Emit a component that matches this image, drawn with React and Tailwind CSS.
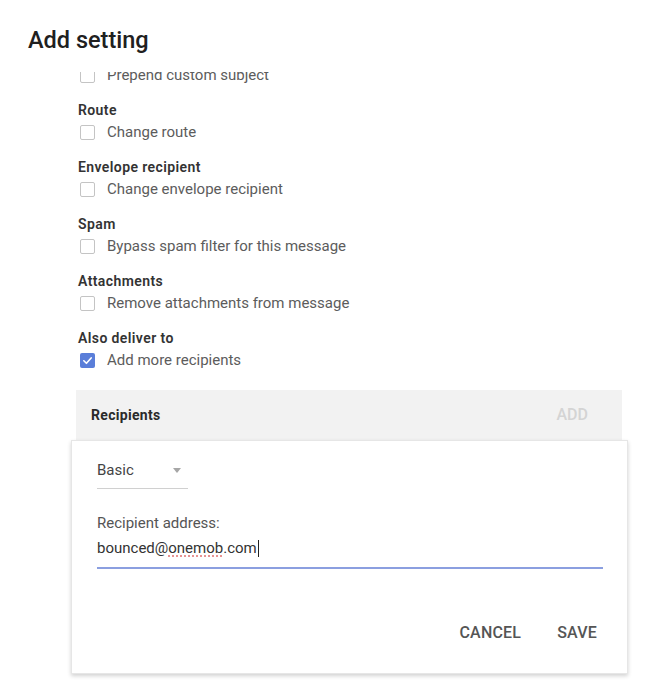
const sections = [
  { label: '', option: 'Prepend custom subject' },
  { label: 'Route', option: 'Change route' },
  { label: 'Envelope recipient', option: 'Change envelope recipient' },
  { label: 'Spam', option: 'Bypass spam filter for this message' },
  { label: 'Attachments', option: 'Remove attachments from message' },
  { label: 'Also deliver to', option: 'Add more recipients', checked: true },
]

function Checkbox({ checked }) {
  if (checked) {
    return (
      <span className="w-[15px] h-[15px] rounded-[2px] bg-[#5a7ed9] flex items-center justify-center">
        <svg width="11" height="11" viewBox="0 0 12 12" fill="none">
          <path d="M2 6.3 4.8 9 10 3.2" stroke="white" strokeWidth="1.8" strokeLinecap="round" strokeLinejoin="round" />
        </svg>
      </span>
    )
  }
  return <span className="w-[15px] h-[15px] rounded-[2px] border-[1.5px] border-[#c4c4c4] bg-white" />
}

export default function App() {
  return (
    <div className="w-[646px] h-[682px] bg-white overflow-hidden flex flex-col font-['Roboto',sans-serif]">
      <div className="h-[72px] shrink-0 pl-[28px] pt-[26px]">
        <h1 className="text-[23.5px] leading-[28px] font-medium text-[#202020]">Add setting</h1>
      </div>

      <div className="flex-1 overflow-hidden">
        <div className="-mt-[29px] pl-[78px]">
          {sections.map((s, i) => (
            <div key={s.option} className={i < sections.length - 1 ? 'mb-[14px]' : ''}>
              <div className="h-[20px] leading-[20px] text-[14px] font-semibold tracking-[0.4px] text-[#333]">{s.label}</div>
              <label className="mt-[1px] h-[22px] flex items-center gap-[12px] pl-[2px]">
                <Checkbox checked={s.checked} />
                <span className="text-[15px] text-[#5c5c5c]">{s.option}</span>
              </label>
            </div>
          ))}
        </div>

        <div className="ml-[76px] w-[546px] mt-[19px]">
          <div className="h-[50px] bg-[#f2f2f2] flex items-center justify-between pl-[15px] pr-[34px]">
            <span className="text-[14px] font-bold tracking-[0.3px] text-[#2a2a2a]">Recipients</span>
            <span className="text-[16px] font-medium text-[#d4d4d4]">ADD</span>
          </div>

          <div className="-ml-[5px] w-[557px] bg-white border border-[#e6e6e6] shadow-[0_2px_4px_rgba(0,0,0,0.18)] pt-[12px] pb-[22px] pl-[25px] pr-[24px]">
            <div className="w-[91px] h-[36px] border-b border-[#d0d0d0] flex items-center justify-between pr-[7px]">
              <span className="text-[15px] text-[#444]">Basic</span>
              <span className="w-0 h-0 border-l-[4px] border-r-[4px] border-t-[5px] border-l-transparent border-r-transparent border-t-[#a6a6a6]" />
            </div>

            <div className="mt-[25px] h-[18px] leading-[18px] text-[15px] text-[#555]">Recipient address:</div>
            <div className="mt-[5px] pb-[8px] border-b-2 border-[#8b9fe0]">
              <div className="h-[22px] leading-[22px] text-[15px] text-[#333] flex items-center">
                <span>bounced@</span>
                <span className="underline decoration-dotted decoration-[#e07070] underline-offset-[3px]">onemob</span>
                <span>.com</span>
                <span className="w-[1px] h-[17px] bg-[#222] ml-[1px]" />
              </div>
            </div>

            <div className="mt-[46px] h-[36px] flex items-center justify-end gap-[36px] pr-[6px]">
              <button className="text-[16px] font-medium text-[#555] tracking-[0.2px]">CANCEL</button>
              <button className="text-[16px] font-medium text-[#555] tracking-[0.2px]">SAVE</button>
            </div>
          </div>
        </div>
      </div>
    </div>
  )
}
